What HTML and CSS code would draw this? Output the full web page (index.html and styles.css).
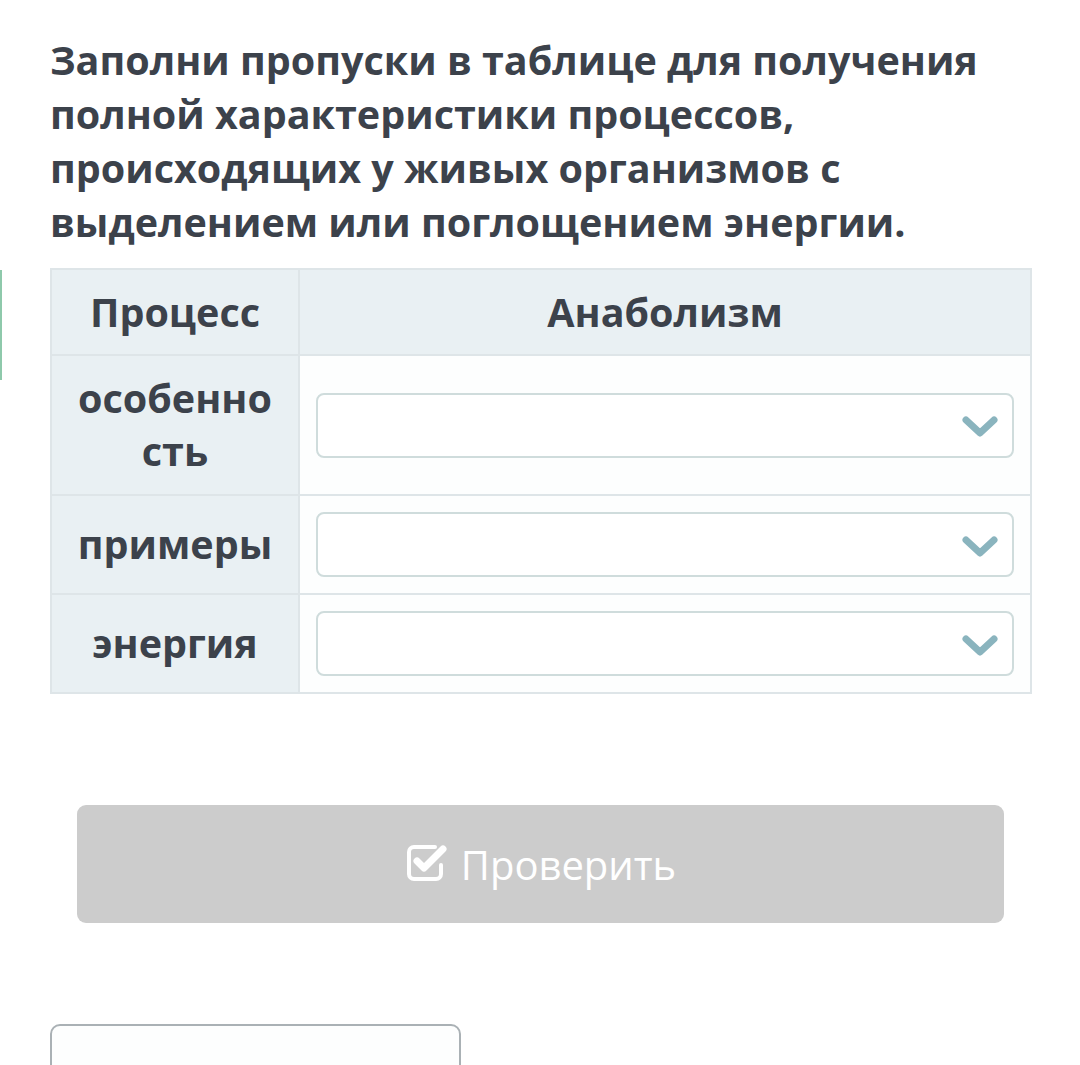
FILE: index.html
```html
<!DOCTYPE html>
<html lang="ru">
<head>
<meta charset="utf-8">
<link rel="stylesheet" href="styles.css">
</head>
<body>
<div class="side-mark"></div>
<main class="page">
  <h1 class="task">Заполни пропуски в таблице для получения полной характеристики процессов, происходящих у живых организмов с выделением или поглощением энергии.</h1>
  <table class="grid">
    <tr>
      <th class="head col-a">Процесс</th>
      <th class="head">Анаболизм</th>
    </tr>
    <tr>
      <th class="label">особенно сть</th>
      <td class="cell"><div class="select"><svg class="chev" viewBox="0 0 36 22"><path d="M4 4 L18 17 L32 4" fill="none" stroke="#8ab4be" stroke-width="7" stroke-linecap="round" stroke-linejoin="round"/></svg></div></td>
    </tr>
    <tr>
      <th class="label">примеры</th>
      <td class="cell"><div class="select"><svg class="chev" viewBox="0 0 36 22"><path d="M4 4 L18 17 L32 4" fill="none" stroke="#8ab4be" stroke-width="7" stroke-linecap="round" stroke-linejoin="round"/></svg></div></td>
    </tr>
    <tr>
      <th class="label">энергия</th>
      <td class="cell"><div class="select"><svg class="chev" viewBox="0 0 36 22"><path d="M4 4 L18 17 L32 4" fill="none" stroke="#8ab4be" stroke-width="7" stroke-linecap="round" stroke-linejoin="round"/></svg></div></td>
    </tr>
  </table>
  <div class="actions">
    <button class="check"><svg class="check-icon" viewBox="0 0 42 40"><path d="M30 6 H9 a5 5 0 0 0 -5 5 v22 a5 5 0 0 0 5 5 h22 a5 5 0 0 0 5 -5 v-9" fill="none" stroke="#fff" stroke-width="4" stroke-linecap="round"/><path d="M12 20 L19 27 L38 8" fill="none" stroke="#fff" stroke-width="7" stroke-linecap="round" stroke-linejoin="round"/></svg><span>Проверить</span></button>
  </div>
  <div class="next-box"></div>
</main>
</body>
</html>
```
FILE: styles.css
```css
html, body {
  margin: 0;
  padding: 0;
  background: #ffffff;
}
body {
  font-family: "Open Sans", "Noto Sans", sans-serif;
  color: #3c424b;
  overflow: hidden;
  height: 1065px;
  position: relative;
}
.side-mark {
  position: absolute;
  left: 0;
  top: 270px;
  width: 2px;
  height: 110px;
  background: #8ec9ab;
}
.page {
  padding: 33px 49px 0 50px;
}
.task {
  margin: 0 0 19px 0;
  font-size: 39.5px;
  line-height: 54px;
  font-weight: 700;
}
.grid {
  width: 982px;
  border-collapse: collapse;
  table-layout: fixed;
}
.grid th, .grid td {
  border: 2px solid #dee5e8;
  padding: 16px;
}
.head {
  background: #e9f0f3;
  font-size: 39.5px;
  line-height: 52px;
  font-weight: 700;
  text-align: center;
}
.col-a {
  width: 214px;
}
.label {
  background: #e9f0f3;
  font-size: 39.5px;
  line-height: 53px;
  font-weight: 700;
  text-align: center;
  vertical-align: middle;
}
.cell {
  background: #fdfefe;
  vertical-align: middle;
}
.select {
  height: 61px;
  border: 2px solid #cfdcdc;
  border-radius: 8px;
  background: #ffffff;
  display: flex;
  align-items: center;
  justify-content: flex-end;
  padding-right: 14px;
}
.chev {
  width: 36px;
  height: 22px;
  margin-top: 4px;
}
.actions {
  padding: 111px 27px 0 27px;
}
.check {
  width: 100%;
  height: 118px;
  border: none;
  border-radius: 9px;
  background: #cccccc;
  color: #ffffff;
  font-family: "Open Sans", "Noto Sans", sans-serif;
  font-size: 40px;
  font-weight: 400;
  display: flex;
  align-items: center;
  justify-content: center;
  gap: 14px;
  padding: 0;
}
.check-icon {
  width: 42px;
  height: 40px;
  margin-top: -6px;
}
.next-box {
  margin-top: 101px;
  width: 407px;
  height: 60px;
  border: 2px solid #aab1b5;
  border-radius: 10px;
  background: #fdfefe;
}
```
